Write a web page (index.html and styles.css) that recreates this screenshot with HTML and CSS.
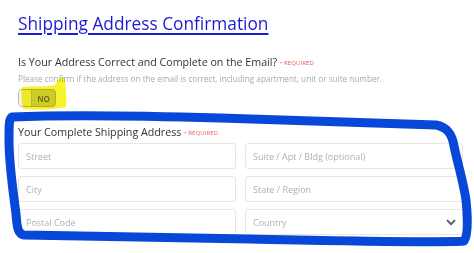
FILE: index.html
```html
<!DOCTYPE html>
<html>
<head>
<meta charset="utf-8">
<link rel="stylesheet" href="styles.css">
</head>
<body>
<div class="page">
  <h1 class="title"><a href="#">Shipping Address Confirmation</a></h1>
  <div class="field">
    <div class="label">Is Your Address Correct and Complete on the Email? <span class="req">• REQUIRED</span></div>
    <div class="help">Please confirm if the address on the email is correct, including apartment, unit or suite number.</div>
    <div class="toggle"><span class="knob"></span><span class="tval">NO</span></div>
  </div>
  <div class="field address">
    <div class="label">Your Complete Shipping Address <span class="req">• REQUIRED</span></div>
    <div class="grid">
      <div class="input">Street</div>
      <div class="input">Suite / Apt / Bldg (optional)</div>
      <div class="input">City</div>
      <div class="input">State / Region</div>
      <div class="input">Postal Code</div>
      <div class="input select">Country
        <svg class="chev" width="10" height="7" viewBox="0 0 10 7"><path d="M1 1.2 L5 5.2 L9 1.2" fill="none" stroke="#555" stroke-width="1.8"/></svg>
      </div>
    </div>
  </div>
</div>
<svg class="marker-yellow" width="474" height="253" viewBox="0 0 474 253">
  <path d="M22 87 C35 86 48 87 55 85 C57 81 60 77 64 77 C66 86 67 98 66 107 C52 110 36 110 23 109 C21 101 21 93 22 87 Z" fill="#f5f200" opacity="0.82"/>
</svg>
<svg class="marker-blue" width="474" height="253" viewBox="0 0 474 253">
  <path d="M12 117 C60 115 150 116 220 118 C300 120 380 123 436 125 C447 127 452 134 454 146 C458 165 463 180 466 200 C468 220 468 236 464 241 C440 243 350 241 250 239 C150 237 60 235 24 235 C18 234 17 228 16 214 C13 190 9 165 9 140 C9 124 9 119 12 117 Z" fill="none" stroke="#0848d8" stroke-width="9" stroke-linejoin="round"/>
</svg>
</body>
</html>
```
FILE: styles.css
```css
html, body {
  margin: 0;
  padding: 0;
  background: #ffffff;
}
body {
  font-family: "Open Sans", "Noto Sans", sans-serif;
  color: #333;
  width: 474px;
  height: 253px;
  overflow: hidden;
  position: relative;
}
.page {
  padding: 10px 11px 0 18px;
}
.title {
  margin: 0;
  font-size: 17.3px;
  font-weight: 400;
  line-height: 28px;
}
.title a {
  color: #1c1cd4;
  text-decoration: underline;
  text-decoration-thickness: 2px;
  text-underline-offset: 3px;
}
.field {
  margin-top: 16px;
}
.label {
  font-size: 10.7px;
  line-height: 16px;
  color: #333;
}
.req {
  font-size: 6px;
  color: #e85a5a;
  letter-spacing: 0.1px;
  vertical-align: 1px;
}
.help {
  font-size: 8.2px;
  color: #a9a9a9;
  line-height: 14px;
  margin-top: 1px;
}
.toggle {
  margin-top: 3px;
  width: 36px;
  height: 16px;
  border: 1px solid #b9b9b9;
  border-radius: 4px;
  background: #d4d4d4;
  display: flex;
  align-items: center;
  overflow: hidden;
}
.knob {
  width: 12px;
  height: 16px;
  background: #f4f4f4;
  border-right: 1px solid #c4c4c4;
}
.tval {
  flex: 1;
  text-align: center;
  font-size: 8px;
  font-weight: 600;
  color: #666;
}
.address {
  margin-top: 17px;
}
.grid {
  margin-top: 2px;
  display: grid;
  grid-template-columns: 218px 218px;
  column-gap: 9px;
  row-gap: 7px;
}
.input {
  height: 24px;
  border: 1px solid #e6e6e6;
  border-radius: 3px;
  font-size: 9px;
  color: #b0b0b0;
  display: flex;
  align-items: center;
  padding-left: 7px;
  position: relative;
}
.chev {
  position: absolute;
  right: 6px;
  top: 9px;
}
.marker-yellow {
  position: absolute;
  left: 0;
  top: 0;
  mix-blend-mode: multiply;
  pointer-events: none;
}
.marker-blue {
  position: absolute;
  left: 0;
  top: 0;
  pointer-events: none;
}
```
